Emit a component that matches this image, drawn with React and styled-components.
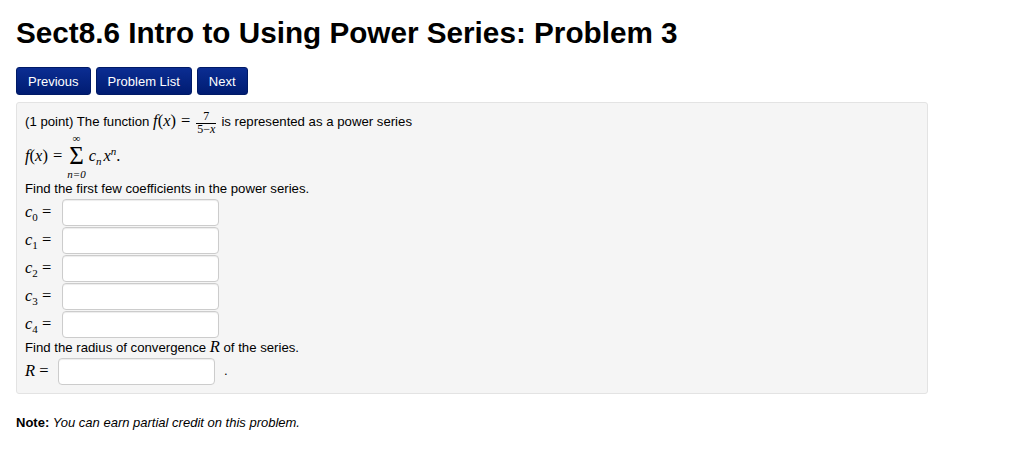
import React from 'react';
import styled, { createGlobalStyle } from 'styled-components';

const GlobalStyle = createGlobalStyle`
  body {
    margin: 0;
    background: #fff;
    font-family: "Liberation Sans", Arial, Helvetica, sans-serif;
    color: #000;
  }
`;

const Page = styled.div`
  padding: 0 96px 0 16px;
  width: 912px;
`;

const Title = styled.h1`
  margin: 0;
  padding-top: 15px;
  font-size: 29.7px;
  line-height: 36px;
  font-weight: bold;
`;

const NavBar = styled.div`
  display: flex;
  gap: 5px;
  margin-top: 16px;
`;

const NavButton = styled.button`
  height: 28px;
  padding: 0 11px;
  border: 1px solid #001a66;
  border-radius: 3px;
  background: linear-gradient(#0b2d92, #001c72);
  color: #fff;
  font-family: "Liberation Sans", Arial, sans-serif;
  font-size: 13px;
  cursor: pointer;
`;

const ProblemPanel = styled.div`
  margin-top: 7px;
  background: #f5f5f5;
  border: 1px solid #e3e3e3;
  border-radius: 3px;
  padding: 10px 8px 8px 8px;
  font-size: 13.2px;
  line-height: 18px;
`;

const Math = styled.span`
  font-family: "Liberation Serif", "Times New Roman", serif;
  font-style: ${(p) => (p.$upright ? 'normal' : 'italic')};
  font-size: 16.5px;
  line-height: 1;
`;

const Eq = styled.span`
  font-family: "Liberation Serif", serif;
  font-size: 16.5px;
  line-height: 1;
  margin: 0 5px;
`;

const Sub = styled.sub`
  font-size: 11px;
  line-height: 0;
  margin-right: ${(p) => p.$gap || 0}px;
  font-style: ${(p) => (p.$italic ? 'italic' : 'normal')};
`;

const Sup = styled.sup`
  font-size: 11px;
  line-height: 0;
`;

const Frac = styled.span`
  display: inline-flex;
  flex-direction: column;
  align-items: center;
  vertical-align: middle;
  font-family: "Liberation Serif", serif;
  font-size: 12px;
  line-height: 11px;
  margin: -6px 5px -6px 1px;
`;

const Num = styled.span`
  align-self: stretch;
  text-align: center;
  padding: 0 1px 1px;
  border-bottom: 1px solid #000;
`;

const Den = styled.span`
  padding: 0 1px;
`;

const SumLine = styled.div`
  display: flex;
  align-items: center;
  height: 48px;
  margin: 1px 0 0;
`;

const Sigma = styled.span`
  display: inline-flex;
  flex-direction: column;
  align-items: center;
  font-family: "Liberation Serif", serif;
  margin: 0 3px 0 0;
`;

const Limit = styled.span`
  font-size: 11px;
  line-height: 12px;
  font-style: ${(p) => (p.$italic ? 'italic' : 'normal')};
`;

const BigSigma = styled.span`
  font-size: 25px;
  line-height: 24px;
`;

const AnswerRow = styled.div`
  display: flex;
  align-items: center;
  height: 28px;
`;

const Label = styled.span`
  width: ${(p) => p.$w || 37}px;
  font-family: "Liberation Serif", serif;
  font-size: 16.5px;
  white-space: nowrap;
`;

const AnswerInput = styled.input`
  box-sizing: border-box;
  width: 157px;
  height: 27px;
  border: 1px solid #ccc;
  border-radius: 4px;
  background: #fff;
  box-shadow: inset 0 1px 1px rgba(0, 0, 0, 0.075);
`;

const Para = styled.div`
  height: 18px;
  margin-top: ${(p) => p.$mt || 0}px;
  white-space: nowrap;
`;

const Period = styled.span`
  margin-left: 9px;
  color: #000;
`;

const Note = styled.p`
  margin: 21px 0 0;
  font-size: 13px;
`;

const coefs = ['0', '1', '2', '3', '4'];

export default function App() {
  return (
    <>
      <GlobalStyle />
      <Page>
        <Title>Sect8.6 Intro to Using Power Series: Problem 3</Title>
        <NavBar>
          <NavButton>Previous</NavButton>
          <NavButton>Problem List</NavButton>
          <NavButton>Next</NavButton>
        </NavBar>
        <ProblemPanel>
          <Para>
            (1 point) The function <Math>f</Math>
            <Math $upright>(</Math>
            <Math>x</Math>
            <Math $upright>)</Math>
            <Eq>=</Eq>
            <Frac>
              <Num>7</Num>
              <Den>
                5−<i>x</i>
              </Den>
            </Frac>
            is represented as a power series
          </Para>
          <SumLine>
            <Math>f</Math>
            <Math $upright>(</Math>
            <Math>x</Math>
            <Math $upright>)</Math>
            <Eq>=</Eq>
            <Sigma>
              <Limit>∞</Limit>
              <BigSigma>Σ</BigSigma>
              <Limit $italic>n=0</Limit>
            </Sigma>
            <Math>
              c<Sub $italic $gap={2}>n</Sub>x<Sup>n</Sup>
            </Math>
            <Math $upright>.</Math>
          </SumLine>
          <Para>Find the first few coefficients in the power series.</Para>
          <div>
            {coefs.map((k) => (
              <AnswerRow key={k}>
                <Label>
                  <i>c</i>
                  <Sub>{k}</Sub> =
                </Label>
                <AnswerInput />
              </AnswerRow>
            ))}
          </div>
          <Para $mt={1}>
            Find the radius of convergence <Math>R</Math> of the series.
          </Para>
          <AnswerRow>
            <Label $w={33}>
              <i>R</i> =
            </Label>
            <AnswerInput />
            <Period>.</Period>
          </AnswerRow>
        </ProblemPanel>
        <Note>
          <b>Note:</b> <i>You can earn partial credit on this problem.</i>
        </Note>
      </Page>
    </>
  );
}
